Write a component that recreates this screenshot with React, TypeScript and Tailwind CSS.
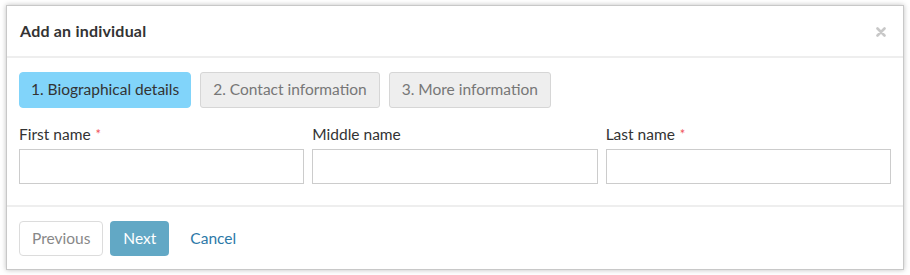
import React from 'react';

const tabs = ['1. Biographical details', '2. Contact information', '3. More information'];

const fields = [
  { label: 'First name', required: true },
  { label: 'Middle name', required: false },
  { label: 'Last name', required: true },
];

export default function App() {
  return (
    <div className="w-[910px] h-[275px] bg-white pt-[5px] px-[6px] font-['Lato',sans-serif]">
      <div className="h-[265px] bg-white border border-[#c8c8c8] shadow-[0_0_5px_rgba(0,0,0,0.25)] flex flex-col">
        {/* header */}
        <div className="h-[52px] flex items-center justify-between pl-[13px] pr-[17px] border-b-2 border-[#eeeeee]">
          <h4 className="text-[16px] font-bold text-[#333] tracking-[0.2px]">Add an individual</h4>
          <svg width="10" height="10" viewBox="0 0 10 10" className="mt-[1px]">
            <path d="M1.5 1.5 L8.5 8.5 M8.5 1.5 L1.5 8.5" stroke="#c8c8c8" strokeWidth="2.6" strokeLinecap="round" />
          </svg>
        </div>

        {/* body */}
        <div className="px-[12px] pt-[14px] pb-[21px] border-b-2 border-[#eeeeee]">
          <div className="flex gap-[9px]">
            {tabs.map((t, i) => (
              <div
                key={t}
                className={
                  i === 0
                    ? 'h-[36px] px-[11px] flex items-center rounded-[4px] bg-[#81d4fa] text-[#333] text-[15.5px] border border-[#81d4fa]'
                    : 'h-[36px] px-[12px] flex items-center rounded-[3px] bg-[#eeeeee] text-[#777] text-[15.5px] border border-[#d6d6d6]'
                }
              >
                {t}
              </div>
            ))}
          </div>
          <div className="grid grid-cols-3 gap-[8px] mt-[16px]">
            {fields.map((f) => (
              <div key={f.label}>
                <div className="text-[15.5px] text-[#333] leading-[21px] mb-[4px]">
                  {f.label}
                  {f.required && <span className="text-[#f0535a] text-[13px] ml-[5px] align-top">*</span>}
                </div>
                <div className="h-[35px] border border-[#cccccc] bg-white"></div>
              </div>
            ))}
          </div>
        </div>

        {/* footer */}
        <div className="flex items-center px-[12px] pt-[14px]">
          <button className="h-[35px] px-[12px] border border-[#dcdcdc] rounded-[4px] text-[15.5px] text-[#888] bg-white">
            Previous
          </button>
          <button className="h-[35px] px-[13px] ml-[7px] rounded-[4px] text-[15.5px] text-white bg-[#62a8c5]">Next</button>
          <button className="h-[35px] px-[14px] ml-[7px] text-[15.5px] text-[#2d79a8]">Cancel</button>
        </div>
      </div>
    </div>
  );
}
